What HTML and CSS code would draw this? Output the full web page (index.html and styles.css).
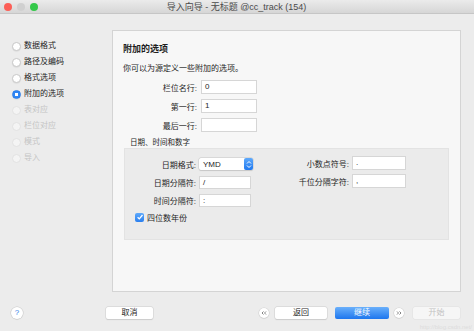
FILE: index.html
```html
<!DOCTYPE html>
<html lang="zh">
<head>
<meta charset="UTF-8">
<title>导入向导</title>
<link rel="stylesheet" href="styles.css">
</head>
<body>
<div class="window">
  <div class="titlebar">
    <div class="lights">
      <span class="light red"></span>
      <span class="light gray"></span>
      <span class="light green"></span>
    </div>
    <div class="title">导入向导 - 无标题 @cc_track (154)</div>
  </div>

  <div class="content">
    <ul class="steps">
      <li class="step"><span class="radio"></span>数据格式</li>
      <li class="step"><span class="radio"></span>路径及编码</li>
      <li class="step"><span class="radio"></span>格式选项</li>
      <li class="step active"><span class="radio"></span>附加的选项</li>
      <li class="step disabled"><span class="radio"></span>表对应</li>
      <li class="step disabled"><span class="radio"></span>栏位对应</li>
      <li class="step disabled"><span class="radio"></span>模式</li>
      <li class="step disabled"><span class="radio"></span>导入</li>
    </ul>

    <div class="panel">
      <h2 class="heading">附加的选项</h2>
      <p class="desc">你可以为源定义一些附加的选项。</p>

      <div class="rows">
        <div class="row"><label class="label">栏位名行:</label><div class="field">0</div></div>
        <div class="row"><label class="label">第一行:</label><div class="field">1</div></div>
        <div class="row"><label class="label">最后一行:</label><div class="field"></div></div>
      </div>

      <div class="group-title">日期、时间和数字</div>
      <div class="group">
        <div class="col left">
          <div class="grow">
            <label class="glabel">日期格式:</label>
            <div class="select">
              <span>YMD</span>
              <span class="stepper">
                <svg width="6" height="9" viewBox="0 0 6 9"><path d="M1 3.5 L3 1.5 L5 3.5 M1 5.5 L3 7.5 L5 5.5" fill="none" stroke="#fff" stroke-width="1"/></svg>
              </span>
            </div>
          </div>
          <div class="grow"><label class="glabel">日期分隔符:</label><div class="field small">/</div></div>
          <div class="grow"><label class="glabel">时间分隔符:</label><div class="field small">:</div></div>
          <div class="check-row">
            <span class="checkbox">
              <svg width="8" height="8" viewBox="0 0 8 8"><path d="M1.6 4.2 L3.3 5.9 L6.5 2" fill="none" stroke="#fff" stroke-width="1.3"/></svg>
            </span>
            四位数年份
          </div>
        </div>
        <div class="col right">
          <div class="grow"><label class="glabel wide">小数点符号:</label><div class="field num">.</div></div>
          <div class="grow"><label class="glabel wide">千位分隔字符:</label><div class="field num">,</div></div>
        </div>
      </div>
    </div>
  </div>

  <div class="footer">
    <span class="help">?</span>
    <button class="btn cancel">取消</button>
    <span class="spacer"></span>
    <span class="nav">
      <svg width="6" height="4" viewBox="0 0 6 4"><path d="M2.5 0.5 L1 2 L2.5 3.5 M5 0.5 L3.5 2 L5 3.5" fill="none" stroke="#666" stroke-width="0.8"/></svg>
    </span>
    <button class="btn back">返回</button>
    <button class="btn primary">继续</button>
    <span class="nav next">
      <svg width="6" height="4" viewBox="0 0 6 4"><path d="M1 0.5 L2.5 2 L1 3.5 M3.5 0.5 L5 2 L3.5 3.5" fill="none" stroke="#666" stroke-width="0.8"/></svg>
    </span>
    <button class="btn disabled-btn">开始</button>
  </div>
  <div class="watermark">http://blog.csdn.net/</div>
</div>
</body>
</html>
```

FILE: styles.css
```css
body {
  margin: 0;
  font-family: "Liberation Sans", "Noto Sans CJK SC", sans-serif;
  font-size: 8px;
  color: #1e1e1e;
}

.window {
  width: 474px;
  height: 331px;
  background-color: #ececec;
  display: flex;
  flex-direction: column;
  position: relative;
  overflow: hidden;
}

/* barra de titulo */
.titlebar {
  height: 14px;
  flex: none;
  display: flex;
  align-items: center;
  background: linear-gradient(#ebebeb, #d6d6d6);
  border-bottom: 1px solid #c6c6c6;
  box-sizing: border-box;
}

.lights {
  display: flex;
  gap: 5px;
  padding-left: 4px;
  width: 60px;
}

.light {
  width: 8px;
  height: 8px;
  border-radius: 50%;
}
.red { background-color: #fc5f57; }
.gray { background-color: #d0d0d0; }
.green { background-color: #34c84a; }

.title {
  flex: 1;
  text-align: center;
  font-size: 9px;
  color: #4a4a4a;
  padding-right: 120px;
  margin-left: 55px;
}

.content {
  display: flex;
  flex: none;
  height: 278px;
}

/* lista de pasos */
.steps {
  list-style: none;
  margin: 0;
  padding: 24px 0 0 12px;
  width: 100px;
}

.step {
  height: 16px;
  display: flex;
  align-items: center;
  gap: 3px;
  line-height: 16px;
}

.radio {
  width: 9px;
  height: 9px;
  border-radius: 50%;
  background-color: #fff;
  border: 1px solid #c9c9c9;
  box-sizing: border-box;
  box-shadow: 0 0.5px 1px rgba(0, 0, 0, 0.1);
}

.step.active .radio {
  background: radial-gradient(circle, #fff 0 1.6px, #2f86f5 2px);
  border-color: #2a7de8;
}

.step.disabled {
  color: #c4c4c4;
}
.step.disabled .radio {
  border-color: #e2e2e2;
  background-color: #f4f4f4;
  box-shadow: none;
}

/* panel principal */
.panel {
  margin-top: 16px;
  width: 349px;
  height: 262px;
  box-sizing: border-box;
  background-color: #f7f7f7;
  border: 1px solid #d4d4d4;
  padding: 12px 11px 0 10px;
}

.heading {
  margin: 0;
  font-size: 9px;
  font-weight: bold;
  line-height: 12px;
}

.desc {
  margin: 8px 0 0;
  line-height: 12px;
}

.rows {
  display: flex;
  flex-direction: column;
  gap: 5px;
  margin-top: 5px;
}

.row {
  display: flex;
  align-items: center;
  gap: 4px;
  height: 14px;
}

.label {
  width: 74px;
  text-align: right;
}

.field {
  width: 56px;
  height: 14px;
  box-sizing: border-box;
  background-color: #fff;
  border: 1px solid #d6d6d6;
  padding-left: 3px;
  line-height: 12px;
  font-size: 8px;
}

.field.small {
  width: 52px;
  height: 13px;
  line-height: 11px;
}

.field.num {
  width: 54px;
}

.group-title {
  margin: 5px 0 0 7px;
  line-height: 11px;
  font-size: 7.5px;
}

.group {
  margin: 0 0 0 1px;
  height: 92px;
  box-sizing: border-box;
  background-color: #ebebeb;
  border: 1px solid #e3e3e3;
  display: flex;
}

.col {
  display: flex;
  flex-direction: column;
}

.col.left {
  padding-top: 8px;
  gap: 4px;
}

.col.right {
  padding-top: 7px;
  gap: 4px;
}

.grow {
  display: flex;
  align-items: center;
  gap: 3px;
  height: 14px;
}

.glabel {
  width: 71px;
  text-align: right;
}

.glabel.wide {
  width: 96px;
}

.select {
  width: 54px;
  height: 12px;
  box-sizing: border-box;
  background-color: #fff;
  border-radius: 2px;
  box-shadow: 0 0 0 0.5px #c8c8c8, 0 0.5px 1px rgba(0, 0, 0, 0.15);
  display: flex;
  align-items: center;
  justify-content: space-between;
  padding-left: 4px;
}

.stepper {
  width: 9px;
  height: 12px;
  border-radius: 2px;
  background: linear-gradient(#5ea9fb, #1f78ef);
  display: flex;
  align-items: center;
  justify-content: center;
}

.check-row {
  display: flex;
  align-items: center;
  gap: 3px;
  margin-left: 10px;
  height: 12px;
}

.checkbox {
  width: 9px;
  height: 9px;
  border-radius: 2px;
  background: linear-gradient(#5ea9fb, #2a7fef);
  display: flex;
  align-items: center;
  justify-content: center;
}

/* botones inferiores */
.footer {
  display: flex;
  align-items: center;
  height: 12px;
  margin-top: 15px;
  padding-left: 11px;
  padding-right: 14px;
}

.help {
  width: 12px;
  height: 12px;
  border-radius: 50%;
  background-color: #fff;
  box-shadow: 0 0 0 0.5px #c9c9c9, 0 0.5px 1px rgba(0, 0, 0, 0.15);
  color: #2f7fe8;
  font-size: 8px;
  text-align: center;
  line-height: 12px;
  margin-right: 83px;
}

.btn {
  height: 12px;
  border: none;
  border-radius: 2px;
  background-color: #fff;
  box-shadow: 0 0 0 0.5px #cfcfcf, 0 0.5px 1px rgba(0, 0, 0, 0.15);
  font-family: inherit;
  font-size: 8px;
  color: #1e1e1e;
  padding: 0;
  line-height: 12px;
}

.cancel { width: 47px; }
.back { width: 52px; margin-left: 6px; }
.primary {
  width: 54px;
  margin-left: 8px;
  background: linear-gradient(#6ab0fb, #1d76ee);
  color: #fff;
  box-shadow: none;
}
.disabled-btn {
  width: 47px;
  margin-left: 9px;
  color: #c2c2c2;
  background-color: #f6f6f6;
  box-shadow: 0 0 0 0.5px #e0e0e0;
}

.spacer { flex: 1; }

.nav {
  width: 10px;
  height: 10px;
  border-radius: 50%;
  background-color: #fff;
  box-shadow: 0 0 0 0.5px #cfcfcf, 0 0.5px 1px rgba(0, 0, 0, 0.15);
  display: flex;
  align-items: center;
  justify-content: center;
}

.nav.next { margin-left: 5px; }

.watermark {
  position: absolute;
  right: 2px;
  bottom: 1px;
  font-size: 6px;
  color: #dcdcdc;
}
```
